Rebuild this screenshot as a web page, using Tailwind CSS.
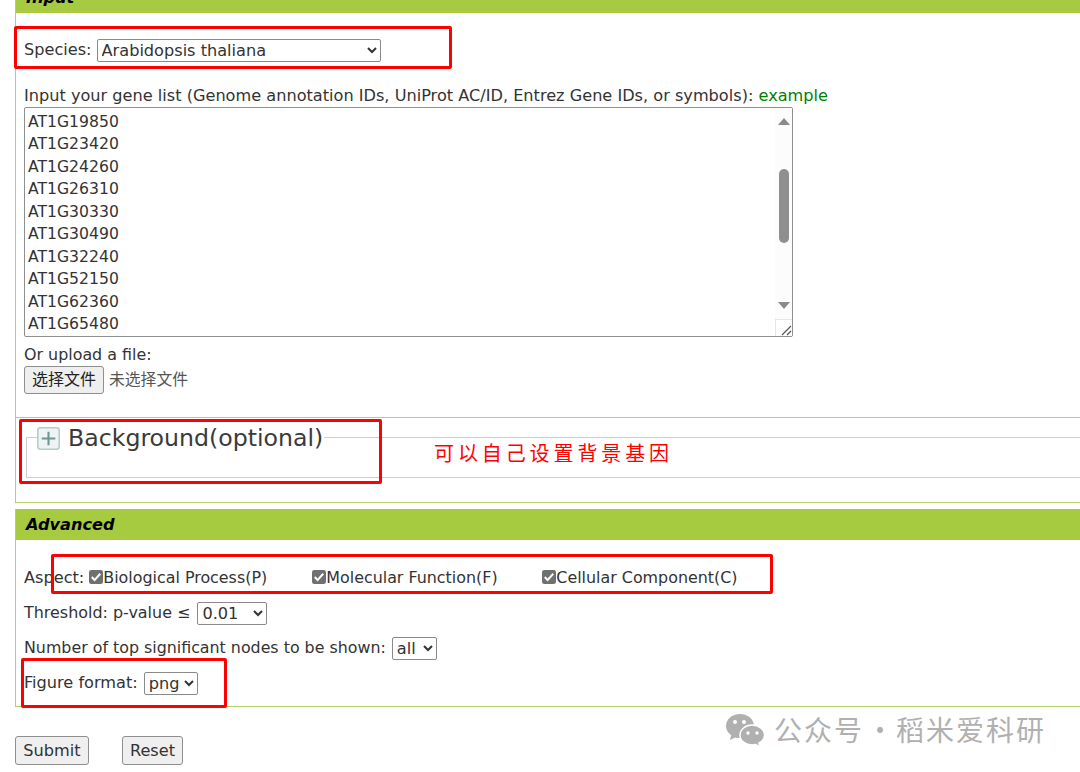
<!DOCTYPE html>
<html lang="en">
<head>
  <meta charset="UTF-8" />
  <meta name="viewport" content="width=device-width, initial-scale=1" />
  <title>GO enrichment</title>
  <script src="https://cdn.jsdelivr.net/npm/@tailwindcss/browser@4"></script>
</head>
<body class="bg-white overflow-hidden">
  <div class="relative w-[1080px] h-[772px] overflow-hidden text-[#333] text-[16.15px] leading-[20px] font-['DejaVu_Sans','Noto_Sans_CJK_SC',sans-serif]">
    <form class="pl-[15px]">

      <!-- input panel -->
      <section class="w-[1085px] h-[503px] border-l border-b border-[#b5d36a]">
        <h2 class="h-[13px] bg-[#a6ca40] flex items-end pl-[10px] overflow-hidden font-bold italic text-black"><span class="leading-[14px] -translate-y-[8px]">Input</span></h2>
        <div class="pl-[8px] pt-[25px]">
          <div class="flex items-center h-[24px]">
            <label>Species:</label>
            <select class="ml-[5px] w-[284px] h-[23px] appearance-auto bg-white border border-[#8a8a8a] rounded-[2px] text-[16.15px]">
              <option>Arabidopsis thaliana</option>
            </select>
          </div>
          <p class="mt-[24px]">Input your gene list (Genome annotation IDs, UniProt AC/ID, Entrez Gene IDs, or symbols): <a class="text-[#008000]" href="#">example</a></p>

          <!-- gene list with scrollbar -->
          <div class="mt-[1px] relative w-[769px] h-[230px] border border-[#8f8f8f] rounded-[2px] overflow-hidden">
            <div class="pl-[3px] pt-[3px] leading-[22.45px] text-[15.65px] text-[#333]">
              <div>AT1G19850</div>
              <div>AT1G23420</div>
              <div>AT1G24260</div>
              <div>AT1G26310</div>
              <div>AT1G30330</div>
              <div>AT1G30490</div>
              <div>AT1G32240</div>
              <div>AT1G52150</div>
              <div>AT1G62360</div>
              <div>AT1G65480</div>
            </div>
            <div class="absolute right-0 top-0 bottom-0 w-[17px] bg-[#fcfcfc] flex flex-col items-center">
              <svg class="mt-[10px]" width="12" height="7" viewBox="0 0 12 7"><path d="M6 0 12 7H0Z" fill="#8a8a8a"/></svg>
              <div class="mt-[44px] w-[10px] h-[74px] rounded-[5px] bg-[#8f8f8f]"></div>
              <svg class="mt-[59px]" width="12" height="7" viewBox="0 0 12 7"><path d="M0 0H12L6 7Z" fill="#8a8a8a"/></svg>
            </div>
            <div class="absolute right-0 bottom-0 w-[17px] h-[17px] bg-white border-l border-t border-[#e6e6e6]">
              <svg class="absolute right-0 bottom-0" width="12" height="12" viewBox="0 0 12 12"><path d="M2 11 11 2M7 11 11 7" stroke="#555" stroke-width="1.2" fill="none"/></svg>
            </div>
          </div>

          <p class="mt-[8px] text-[15.9px]">Or upload a file:</p>
          <div class="flex items-center mt-[1px]">
            <button type="button" class="w-[80px] h-[28px] bg-[#efefef] border border-[#8f8f8f] rounded-[3px] text-[#222] text-[16px]">选择文件</button>
            <span class="ml-[5px] text-[#555] text-[15.8px]">未选择文件</span>
          </div>
        </div>

        <div class="mt-[23px] border-t border-[#b5d36a] pt-[19px] pl-[10px]">
          <fieldset class="h-[41px] border border-[#ccc] border-r-0 relative">
            <div class="absolute left-[10px] top-[-13px] flex items-center bg-white pr-[1px]">
              <svg width="23" height="23" viewBox="0 0 22 22"><rect x="0.75" y="0.75" width="20.5" height="20.5" rx="2.5" fill="#eef4f4" stroke="#b4cccc" stroke-width="1.5"/><path d="M11 4.500V17.500M4.500 11H17.500" stroke="#6f9595" stroke-width="2"/></svg>
              <span class="ml-[8px] text-[23.65px] leading-[26px] text-[#3a3a3a]">Background(optional)</span>
            </div>
          </fieldset>
        </div>
      </section>

      <!-- advanced panel -->
      <section class="mt-[6px] w-[1085px] h-[198px] border-l border-b border-[#b5d36a]">
        <h2 class="h-[31px] bg-[#a6ca40] flex items-center pl-[10px] font-bold italic text-black">Advanced</h2>
        <div class="pl-[8px]">
          <div class="mt-[27px] flex items-center h-[22px]">
            <span>Aspect:</span>
            <label class="ml-[5px] flex items-center w-[223px] text-[15.9px]"><svg class="-translate-y-[1px]" width="14" height="14" viewBox="0 0 15 15"><rect width="15" height="15" rx="2.500" fill="#707070"/><path d="M3 7.500 6 10.800 12 4" stroke="#fff" stroke-width="2.200" fill="none"/></svg>Biological Process(P)</label>
            <label class="flex items-center w-[230px] text-[15.9px]"><svg class="-translate-y-[1px]" width="14" height="14" viewBox="0 0 15 15"><rect width="15" height="15" rx="2.500" fill="#707070"/><path d="M3 7.500 6 10.800 12 4" stroke="#fff" stroke-width="2.200" fill="none"/></svg>Molecular Function(F)</label>
            <label class="flex items-center text-[15.9px]"><svg class="-translate-y-[1px]" width="14" height="14" viewBox="0 0 15 15"><rect width="15" height="15" rx="2.500" fill="#707070"/><path d="M3 7.500 6 10.800 12 4" stroke="#fff" stroke-width="2.200" fill="none"/></svg>Cellular Component(C)</label>
          </div>
          <div class="mt-[12px] flex items-center h-[24px]">
            <span class="text-[15.95px]">Threshold: p-value ≤</span>
            <select class="ml-[7px] w-[70px] h-[23px] appearance-auto bg-white border border-[#8a8a8a] rounded-[2px] text-[16.15px]"><option>0.01</option></select>
          </div>
          <div class="mt-[11px] flex items-center h-[24px]">
            <span class="text-[15.85px]">Number of top significant nodes to be shown:</span>
            <select class="ml-[6px] w-[45px] h-[23px] appearance-auto bg-white border border-[#8a8a8a] rounded-[2px] text-[16.15px]"><option>all</option></select>
          </div>
          <div class="mt-[11px] flex items-center h-[24px]">
            <span>Figure format:</span>
            <select class="ml-[6px] w-[54px] h-[23px] appearance-auto bg-white border border-[#8a8a8a] rounded-[2px] text-[16.15px]"><option>png</option></select>
          </div>
        </div>
      </section>

      <div class="mt-[29px] flex">
        <button type="button" class="w-[74px] h-[29px] bg-[#efefef] border border-[#8f8f8f] rounded-[3px]">Submit</button>
        <button type="button" class="ml-[33px] w-[61px] h-[29px] bg-[#efefef] border border-[#8f8f8f] rounded-[3px]">Reset</button>
      </div>
    </form>

    <!-- red annotation boxes drawn over the form -->
    <div class="absolute left-[14px] top-[26px] w-[438px] h-[43px] border-[3px] border-[#ff0000] rounded-[2px]"></div>
    <div class="absolute left-[19px] top-[419px] w-[363px] h-[65px] border-[3px] border-[#ff0000] rounded-[2px]"></div>
    <div class="absolute left-[51px] top-[554px] w-[722px] h-[40px] border-[3px] border-[#ff0000] rounded-[2px]"></div>
    <div class="absolute left-[21px] top-[658px] w-[206px] h-[50px] border-[3px] border-[#ff0000] rounded-[2px]"></div>
    <p class="absolute left-[434px] top-[441px] text-[20px] leading-[24px] tracking-[3.9px] text-[#ff0000] font-['Noto_Sans_CJK_SC',sans-serif]">可以自己设置背景基因</p>

    <!-- watermark -->
    <div class="absolute left-[725px] top-[711px] flex items-center text-[#b0b0b0] text-[28px] leading-[36px] tracking-[2px] font-['Noto_Sans_CJK_SC',sans-serif]">
      <svg class="translate-y-[1px]" width="40" height="34" viewBox="0 0 40 34">
        <path d="M15 1C7 1 1 6.500 1 13c0 3.800 2 7 5.200 9.200L5 27l5-2.600c1.500.4 3 .6 4.600.6C22 25 29 19 29 13 29 6.500 23 1 15 1Z" fill="#b0b0b0"/>
        <path d="M27 12c-6.600 0-12 4.600-12 10.200S20.400 32 27 32c1.300 0 2.500-.2 3.700-.5L35 34l-1-4c3.400-1.900 5.500-4.800 5.500-7.800C39.500 16.600 33.600 12 27 12Z" fill="#b0b0b0" stroke="#fff" stroke-width="1.500"/>
        <circle cx="10" cy="9" r="2" fill="#fff"/><circle cx="19" cy="9" r="2" fill="#fff"/>
        <circle cx="23" cy="20" r="1.700" fill="#fff"/><circle cx="32" cy="20" r="1.700" fill="#fff"/>
      </svg>
      <span class="ml-[9px]">公众号</span>
      <span class="w-[32px] text-center tracking-normal">·</span>
      <span>稻米爱科研</span>
    </div>
  </div>
</body>
</html>
